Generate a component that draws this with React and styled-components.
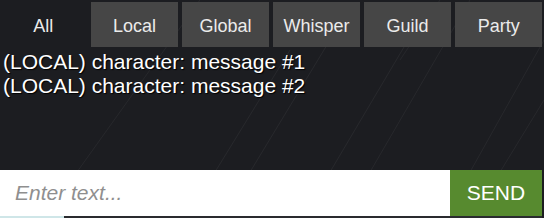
import React from "react";
import styled, { createGlobalStyle } from "styled-components";

const lines = encodeURIComponent(
  `<svg xmlns="http://www.w3.org/2000/svg" width="544" height="218" viewBox="0 0 544 218">
    <g stroke="#ffffff" stroke-opacity="0.05" stroke-width="1" fill="none">
      <line x1="77" y1="172" x2="200" y2="0"/>
      <line x1="215" y1="172" x2="290" y2="50"/>
      <line x1="330" y1="172" x2="420" y2="20"/>
      <line x1="370" y1="172" x2="470" y2="0"/>
      <line x1="470" y1="172" x2="544" y2="40"/>
      <line x1="500" y1="172" x2="544" y2="100"/>
      <line x1="250" y1="172" x2="330" y2="40"/>
      <line x1="400" y1="60" x2="440" y2="0"/>
    </g>
  </svg>`
);

const Global = createGlobalStyle`
  html, body { margin: 0; padding: 0; background: #1c1d21; }
  body { font-family: "Liberation Sans", Arial, sans-serif; }
`;

const Page = styled.div`
  width: 544px;
  height: 218px;
  overflow: hidden;
  background-color: #1c1d21;
  background-image: url("data:image/svg+xml,${lines}");
  display: flex;
  flex-direction: column;
`;

const Chat = styled.div`
  width: 542px;
  display: flex;
  flex-direction: column;
`;

const TabBar = styled.div`
  display: flex;
  gap: 4.4px;
  padding-top: 2px;
  height: 45px;
`;

const Tab = styled.button`
  flex: 1;
  border: none;
  margin: 0;
  padding: 3px 0 0;
  height: 45px;
  background: ${(p) => (p.$active ? "transparent" : "#464646")};
  color: #ebebeb;
  font-family: "Liberation Sans", Arial, sans-serif;
  font-size: 18px;
  cursor: pointer;
`;

const Messages = styled.div`
  height: 120px;
  padding: 3px 3px 0;
  display: flex;
  flex-direction: column;
`;

const Message = styled.div`
  color: #ffffff;
  font-size: 21px;
  line-height: 24px;
  text-shadow: 1px 1px 1px #000;
  white-space: nowrap;
`;

const InputRow = styled.div`
  display: flex;
  height: 46px;
`;

const TextInput = styled.input`
  flex: 1;
  min-width: 0;
  border: none;
  outline: none;
  margin: 0;
  padding: 0 15px;
  background: #ffffff;
  font-family: "Liberation Sans", Arial, sans-serif;
  font-size: 21px;
  color: #222;
  &::placeholder {
    color: #8f8f8f;
    font-style: italic;
  }
`;

const SendButton = styled.button`
  width: 92px;
  border: none;
  margin: 0;
  padding: 0;
  background: #578a2f;
  color: #ffffff;
  font-family: "Liberation Sans", Arial, sans-serif;
  font-size: 21px;
  cursor: pointer;
`;

const Strip = styled.div`
  height: 2px;
  background: #2a2b2f;
  display: flex;
`;

const StripFill = styled.div`
  width: 64px;
  background: #cfe6e8;
`;

const tabs = ["All", "Local", "Global", "Whisper", "Guild", "Party"];
const messages = [
  "(LOCAL) character: message #1",
  "(LOCAL) character: message #2",
];

export default function App() {
  return (
    <>
      <Global />
      <Page>
        <Chat>
          <TabBar>
            {tabs.map((t, i) => (
              <Tab key={t} $active={i === 0}>
                {t}
              </Tab>
            ))}
          </TabBar>
          <Messages>
            {messages.map((m) => (
              <Message key={m}>{m}</Message>
            ))}
          </Messages>
          <InputRow>
            <TextInput placeholder="Enter text..." />
            <SendButton>SEND</SendButton>
          </InputRow>
          <Strip>
            <StripFill />
          </Strip>
        </Chat>
      </Page>
    </>
  );
}
